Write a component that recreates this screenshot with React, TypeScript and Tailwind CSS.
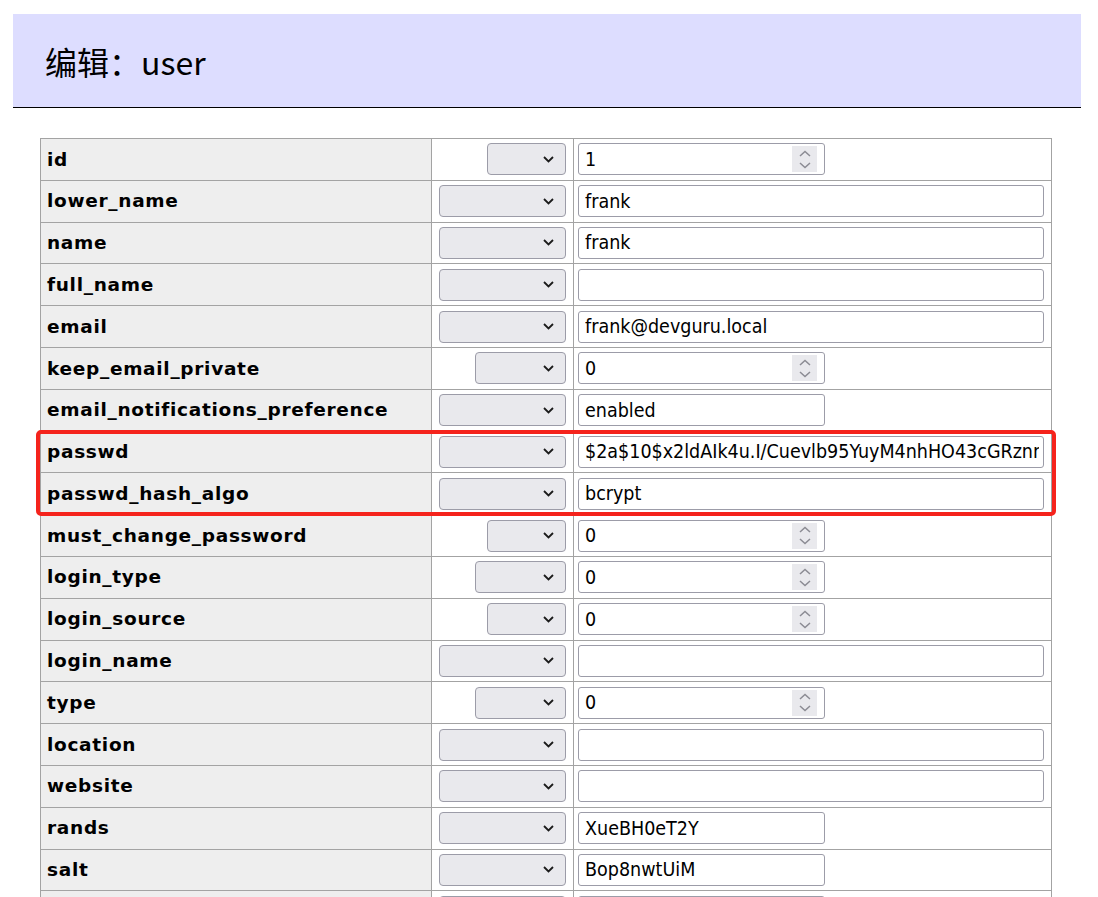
import React from "react";

type Field = {
  name: string;
  fn: number;
  value: string;
  kind: "text" | "short" | "number";
};

const fields: Field[] = [
  { name: "id", fn: 79, value: "1", kind: "number" },
  { name: "lower_name", fn: 127, value: "frank", kind: "text" },
  { name: "name", fn: 127, value: "frank", kind: "text" },
  { name: "full_name", fn: 127, value: "", kind: "text" },
  { name: "email", fn: 127, value: "frank@devguru.local", kind: "text" },
  { name: "keep_email_private", fn: 91, value: "0", kind: "number" },
  { name: "email_notifications_preference", fn: 127, value: "enabled", kind: "short" },
  { name: "passwd", fn: 127, value: "$2a$10$x2ldAIk4u.I/Cuevlb95YuyM4nhHO43cGRznmRDvOlrKwZMvYpBwIbvTqDlGAZYR", kind: "text" },
  { name: "passwd_hash_algo", fn: 127, value: "bcrypt", kind: "text" },
  { name: "must_change_password", fn: 79, value: "0", kind: "number" },
  { name: "login_type", fn: 91, value: "0", kind: "number" },
  { name: "login_source", fn: 79, value: "0", kind: "number" },
  { name: "login_name", fn: 127, value: "", kind: "text" },
  { name: "type", fn: 91, value: "0", kind: "number" },
  { name: "location", fn: 127, value: "", kind: "text" },
  { name: "website", fn: 127, value: "", kind: "text" },
  { name: "rands", fn: 127, value: "XueBH0eT2Y", kind: "short" },
  { name: "salt", fn: 127, value: "Bop8nwtUiM", kind: "short" },
  { name: "language", fn: 127, value: "", kind: "short" },
];

function FnSelect({ width }: { width: number }) {
  return (
    <div
      className="ml-auto flex h-[32px] items-center justify-end rounded-[4px] border border-[#9c9ca8] bg-[#e9e9ed] pr-[11px]"
      style={{ width }}
    >
      <svg width="11" height="7" viewBox="0 0 11 7">
        <polyline points="1,1 5.5,5.5 10,1" fill="none" stroke="#1b1b1b" strokeWidth="1.8" />
      </svg>
    </div>
  );
}

function Spinner() {
  return (
    <div className="flex h-[26px] w-[25px] flex-col items-center justify-center gap-[5px] bg-[#e9e9ed]">
      <svg width="12" height="7" viewBox="0 0 12 7">
        <polyline points="1,6 6,1.5 11,6" fill="none" stroke="#8c8c94" strokeWidth="1.5" />
      </svg>
      <svg width="12" height="7" viewBox="0 0 12 7">
        <polyline points="1,1 6,5.5 11,1" fill="none" stroke="#8c8c94" strokeWidth="1.5" />
      </svg>
    </div>
  );
}

function ValueInput({ f }: { f: Field }) {
  const wide = f.kind === "text";
  return (
    <div
      className={`flex h-[32px] items-center overflow-hidden rounded-[3px] border border-[#9c9ca8] bg-white pl-[6px] ${
        wide ? "w-[466px] pr-[4px]" : "w-[247px]"
      } ${f.kind === "number" ? "pr-[7px]" : ""}`}
    >
      <span className="flex-1 overflow-hidden whitespace-nowrap text-[19.5px] text-black [font-stretch:condensed] [font-family:'DejaVu_Sans_Condensed','DejaVu_Sans',sans-serif]">
        {f.value}
      </span>
      {f.kind === "number" && <Spinner />}
    </div>
  );
}

export default function App() {
  return (
    <div className="min-h-screen bg-white pt-[14px] text-black [font-family:'DejaVu_Sans',Verdana,sans-serif]">
      <h2 className="mr-[17px] ml-[13px] flex h-[94px] items-center border-b border-black bg-[#ddf] pl-[32px] text-[32px] font-normal [font-family:'Noto_Sans_CJK_SC',sans-serif]">
        编辑：user
      </h2>

      <div className="relative mt-[30px] ml-[40px] w-[1011px]">
        <table className="w-[1011px] table-fixed border-collapse">
          <colgroup>
            <col className="w-[391px]" />
            <col className="w-[142px]" />
            <col className="w-[478px]" />
          </colgroup>
          <tbody>
            {fields.map((f) => (
              <tr key={f.name} className="h-[41.8px]">
                <th className="border border-[#a3a3a3] bg-[#eee] pl-[6px] text-left text-[18.5px] font-bold tracking-[0.7px] whitespace-nowrap">
                  {f.name}
                </th>
                <td className="border border-[#a3a3a3] pr-[7px]">
                  <FnSelect width={f.fn} />
                </td>
                <td className="border border-[#a3a3a3] pl-[4px]">
                  <ValueInput f={f} />
                </td>
              </tr>
            ))}
          </tbody>
        </table>

        <div className="pointer-events-none absolute top-[292px] left-[-4px] h-[86px] w-[1020px] rounded-[5px] border-4 border-[#f5231c]" />
      </div>
    </div>
  );
}
